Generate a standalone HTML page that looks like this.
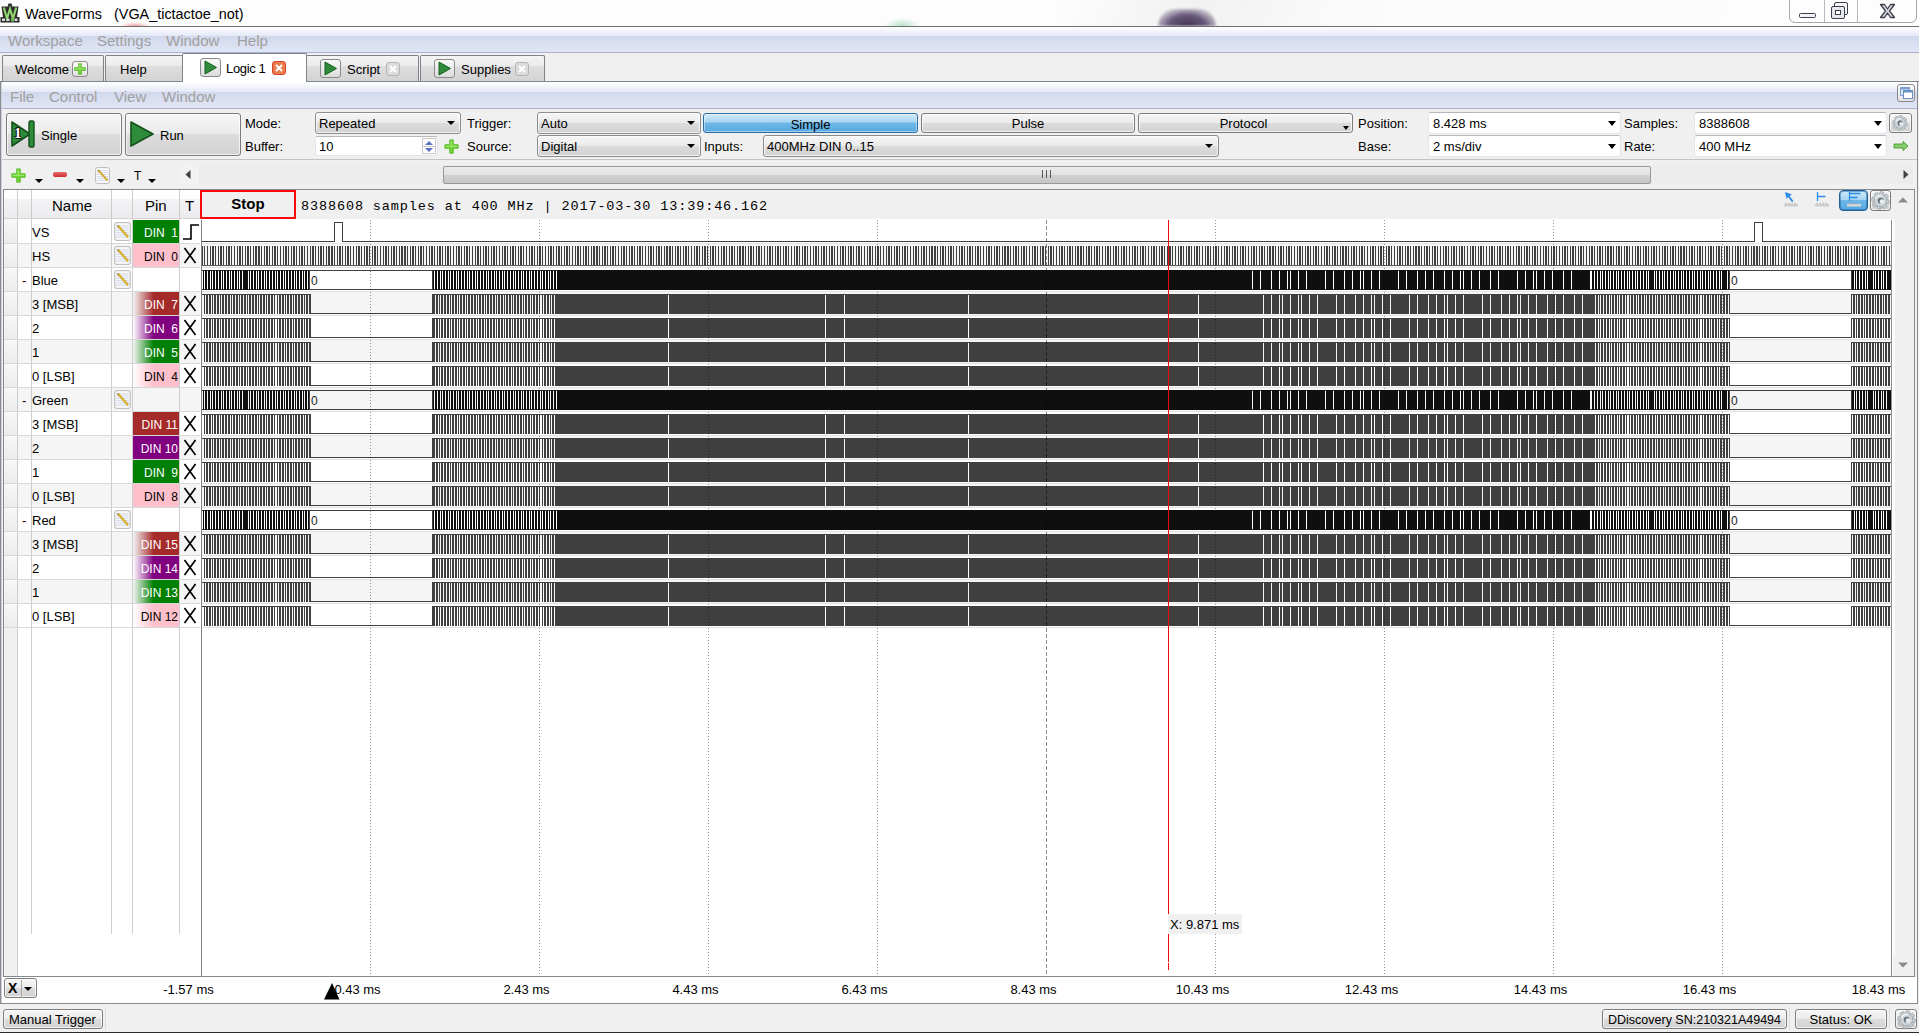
<!DOCTYPE html><html><head><meta charset="utf-8"><title>WaveForms</title><style>
*{box-sizing:border-box}
html,body{margin:0;padding:0}
body{width:1919px;height:1033px;overflow:hidden;position:relative;background:#f0f0f0;font-family:"Liberation Sans",sans-serif;font-size:13px;color:#000;line-height:1}
.a{position:absolute}
.t{position:absolute;white-space:pre;line-height:16px;height:16px}
.mb{position:absolute;left:0;width:1919px;height:26px;background:linear-gradient(#fff 0,#e4e8f6 9px,#d2d8ec 9px,#e1e6f6 25px);border-bottom:1px solid #a9b1cc}
.mt{position:absolute;white-space:pre;font-size:15px;color:#a0a0a0;line-height:20px}
.btn{position:absolute;border:1px solid #7c7c7c;border-radius:3px;background:linear-gradient(#f6f6f6 0,#eaeaea 49%,#dcdcdc 50%,#d2d2d2 100%);box-shadow:inset 0 0 0 1px rgba(255,255,255,.7)}
.cb{position:absolute;border:1px solid #8c8c8c;border-radius:3px;background:linear-gradient(#f6f6f6 0,#eaeaea 49%,#dcdcdc 50%,#d2d2d2 100%);box-shadow:inset 0 0 0 1px rgba(255,255,255,.7)}
.wb{position:absolute;border:1px solid #e1e5ee;border-top-color:#b8b8b8;border-radius:3px;background:#fff}
.arr{position:absolute;width:0;height:0;border-left:4px solid transparent;border-right:4px solid transparent;border-top:4px solid #000}
.tab{position:absolute;top:55px;height:26px;border:1px solid #7e828a;border-bottom:none;border-radius:2px 2px 0 0;background:linear-gradient(#f4f4f4 0,#ececec 38%,#dedede 40%,#d3d3d3 100%)}
.pin{position:absolute;left:133px;width:46px;height:23px;font-size:12px;line-height:26px;text-align:right;white-space:pre;padding-right:1px;overflow:hidden}
.nm{position:absolute;left:32px;white-space:pre;line-height:16px}
.xl{position:absolute;top:982px;white-space:pre;line-height:16px;width:80px;text-align:center}
</style></head><body><div class="a" style="left:0;top:0;width:1919px;height:26px;background:linear-gradient(115deg,#fdfdfd 0,#fdfdfd 55%,#f1f1f1 62%,#fbfbfb 70%,#fefefe 100%)"></div><div class="a" style="left:1158px;top:9px;width:58px;height:17px;border-radius:28px 28px 0 0;background:radial-gradient(ellipse at 50% 100%,#43364f 0,#66577a 45%,rgba(160,150,170,.5) 75%,rgba(255,255,255,0) 100%);filter:blur(1.200px)"></div><div class="a" style="left:884px;top:18px;width:36px;height:8px;background:radial-gradient(ellipse at 50% 100%,rgba(150,215,180,.7) 0,rgba(255,255,255,0) 70%)"></div><div class="a" style="left:120px;top:22px;width:30px;height:4px;background:radial-gradient(ellipse at 50% 100%,rgba(230,120,120,.7) 0,rgba(255,255,255,0) 70%)"></div><div class="a" style="left:0;top:26px;width:1919px;height:1px;background:#6e6e6e"></div><svg class="a" style="left:0px;top:3px" width="20" height="20" viewBox="0 0 20 20"><path d="M1.500 3.500 H18.500 L17 14 H19.500 V19.500 H.5 V14 H3 Z" fill="#2a2a2a"/><circle cx="10" cy="2.500" r="2.200" fill="#333"/><path d="M3.800 4.500 L7 15.500 L10 6 L13 15.500 L16.200 4.500" fill="none" stroke="#8fd46c" stroke-width="2.200"/><path d="M2 15.500 h3 v2.500 h-3z M6.500 15.500 h3 v2.500 h-3z M14.500 15.500 h3 v2.500 h-3z" fill="#d8d8d8"/><path d="M11 15 h2.500 v3.500 h-2.500z" fill="#6db84c"/></svg><div class="t" style="left:25px;top:5px;font-size:14.4px;line-height:19px;height:19px">WaveForms   (VGA_tictactoe_not)</div><div class="a" style="left:1789px;top:-4px;width:128px;height:27px;border:1px solid #a8a8a8;border-radius:0 0 6px 6px;background:#fdfdfd"></div><div class="a" style="left:1824px;top:0;width:1px;height:22px;background:#b8b8b8"></div><div class="a" style="left:1857px;top:0;width:1px;height:22px;background:#b8b8b8"></div><svg class="a" style="left:1795px;top:0" width="110" height="22" viewBox="0 0 110 22"><rect x="4.5" y="13.5" width="16" height="4" rx="1" fill="#f4f4f4" stroke="#3c3f52"/><rect x="39.500" y="2.500" width="13" height="12" rx="1.500" fill="#f4f4f4" stroke="#3c3f52"/><rect x="36.500" y="6.500" width="13" height="12" rx="1.500" fill="#e8e8e8" stroke="#3c3f52"/><rect x="40.500" y="10.500" width="5" height="4" fill="#fff" stroke="#3c3f52"/><path d="M85.500 4.500 h4 l3 4.500 l3 -4.500 h4 l-5 6.500 l5 6.500 h-4 l-3 -4.500 l-3 4.500 h-4 l5 -6.500 z" fill="#dcdcdc" stroke="#3c3f52" stroke-width="1.300" stroke-linejoin="round"/></svg><div class="mb" style="top:27px"></div><div class="mt" style="left:8px;top:31px">Workspace</div><div class="mt" style="left:97px;top:31px">Settings</div><div class="mt" style="left:166px;top:31px">Window</div><div class="mt" style="left:237px;top:31px">Help</div><div class="a" style="left:0;top:81px;width:1919px;height:1px;background:#80848c"></div><div class="tab" style="left:2px;width:102px"></div><div class="tab" style="left:105px;width:78px"></div><div class="tab" style="left:306px;width:113px"></div><div class="tab" style="left:420px;width:125px"></div><div class="a" style="left:182px;top:53px;width:125px;height:29px;border:1px solid #7e828a;border-bottom:none;border-radius:2px 2px 0 0;background:#fff"></div><div class="t" style="left:15px;top:62px">Welcome</div><div class="t" style="left:120px;top:62px">Help</div><div class="t" style="left:226px;top:61px;letter-spacing:-.35px">Logic 1</div><div class="t" style="left:347px;top:62px">Script</div><div class="t" style="left:461px;top:62px">Supplies</div><div class="a" style="left:200px;top:58px;width:21px;height:19px;border:1px solid #8a8a8a;border-radius:3px;background:linear-gradient(#f8f8f8,#dcdcdc)"></div><svg class="a" style="left:204px;top:60px" width="14" height="15" viewBox="0 0 14 15"><path d="M1 1 L12.500 7.500 L1 14 Z" fill="#2e8b3a" stroke="#14601f" stroke-width="1" stroke-linejoin="round"/></svg><div class="a" style="left:320px;top:59px;width:21px;height:19px;border:1px solid #8a8a8a;border-radius:3px;background:linear-gradient(#f8f8f8,#dcdcdc)"></div><svg class="a" style="left:324px;top:61px" width="14" height="15" viewBox="0 0 14 15"><path d="M1 1 L12.500 7.500 L1 14 Z" fill="#2e8b3a" stroke="#14601f" stroke-width="1" stroke-linejoin="round"/></svg><div class="a" style="left:434px;top:59px;width:21px;height:19px;border:1px solid #8a8a8a;border-radius:3px;background:linear-gradient(#f8f8f8,#dcdcdc)"></div><svg class="a" style="left:438px;top:61px" width="14" height="15" viewBox="0 0 14 15"><path d="M1 1 L12.500 7.500 L1 14 Z" fill="#2e8b3a" stroke="#14601f" stroke-width="1" stroke-linejoin="round"/></svg><div class="a" style="left:72px;top:61px;width:16px;height:16px;border:1px solid #8a8a8a;border-radius:3px;background:linear-gradient(#fafafa,#dedede)"></div><svg class="a" style="left:74px;top:63px" width="12" height="12" viewBox="0 0 12 12"><path d="M4.600 .7 h2.800 v3.900 h3.900 v2.800 h-3.900 v3.900 h-2.800 v-3.900 h-3.900 v-2.800 h3.900 z" fill="#6fd535" stroke="#55b322" stroke-width=".7" stroke-linejoin="round"/><path d="M5.300 1.300 h1.200 v3.900 h-1.200z M1.300 5.300 h9.400 v1 h-9.400z" fill="#a6ee7a" opacity=".8"/></svg><div class="a" style="left:272px;top:61px;width:14px;height:14px;border:1px solid #dc4428;border-radius:3px;background:#e87c4e"></div><svg class="a" style="left:275px;top:64px" width="8" height="8" viewBox="0 0 8 8"><path d="M1 1 L7 7 M7 1 L1 7" stroke="#fff" stroke-width="2"/></svg><div class="a" style="left:386px;top:62px;width:14px;height:14px;border:1px solid #b4b4b4;border-radius:3px;background:#dcdcdc"></div><svg class="a" style="left:389px;top:65px" width="8" height="8" viewBox="0 0 8 8"><path d="M1 1 L7 7 M7 1 L1 7" stroke="#fff" stroke-width="2"/></svg><div class="a" style="left:515px;top:62px;width:14px;height:14px;border:1px solid #b4b4b4;border-radius:3px;background:#dcdcdc"></div><svg class="a" style="left:518px;top:65px" width="8" height="8" viewBox="0 0 8 8"><path d="M1 1 L7 7 M7 1 L1 7" stroke="#fff" stroke-width="2"/></svg><div class="a" style="left:0;top:82px;width:1px;height:922px;background:#8a8a92"></div><div class="a" style="left:1px;top:82px;width:1px;height:922px;background:#d0d0d8"></div><div class="a" style="left:1917px;top:82px;width:1px;height:922px;background:#8a8a92"></div><div class="mb" style="top:82px;left:2px;width:1915px;height:27px;background:linear-gradient(#fff 0,#e4e8f6 10px,#d2d8ec 10px,#e1e6f6 26px)"></div><div class="mt" style="left:10px;top:87px">File</div><div class="mt" style="left:49px;top:87px">Control</div><div class="mt" style="left:114px;top:87px">View</div><div class="mt" style="left:162px;top:87px">Window</div><div class="a" style="left:1897px;top:84px;width:18px;height:18px;border:1px solid #8a8a8a;border-radius:3px;background:linear-gradient(#fafafa,#e4e4e4)"></div><svg class="a" style="left:1899px;top:86px" width="14" height="14" viewBox="0 0 14 14"><rect x="1.500" y="1.500" width="9" height="8" fill="#dfe9f7" stroke="#7d9fd0"/><rect x="1.500" y="1.500" width="9" height="2" fill="#7d9fd0"/><rect x="4.500" y="4.500" width="9" height="8" fill="#fff" stroke="#6a8fc8"/><rect x="4.500" y="4.500" width="9" height="2" fill="#6a8fc8"/></svg><div class="btn" style="left:6px;top:113px;width:116px;height:43px"></div><div class="btn" style="left:125px;top:113px;width:116px;height:43px"></div><svg class="a" style="left:10px;top:119px" width="26" height="30" viewBox="0 0 26 30"><path d="M2 3 L20 15 L2 27 Z" fill="#2e8b3a" stroke="#14501c" stroke-width="1.600" stroke-linejoin="round"/><rect x="19" y="2" width="5" height="26" rx="1.500" fill="#2e8b3a" stroke="#14501c" stroke-width="1.400"/></svg><div class="t" style="left:14px;top:125px;font-weight:bold;font-size:15px;color:#fff;font-family:'Liberation Serif',serif;text-shadow:-1px 0 #111,1px 0 #111,0 -1px #111,0 1px #111,1px 1px #111,-1px -1px #111">1</div><svg class="a" style="left:129px;top:119px" width="26" height="30" viewBox="0 0 26 30"><path d="M2 3 L24 15 L2 27 Z" fill="#2e8b3a" stroke="#14501c" stroke-width="1.600" stroke-linejoin="round"/></svg><div class="t" style="left:41px;top:128px">Single</div><div class="t" style="left:160px;top:128px">Run</div><div class="t" style="left:245px;top:116px">Mode:</div><div class="t" style="left:245px;top:139px">Buffer:</div><div class="t" style="left:467px;top:116px">Trigger:</div><div class="t" style="left:467px;top:139px">Source:</div><div class="t" style="left:704px;top:139px">Inputs:</div><div class="t" style="left:1358px;top:116px">Position:</div><div class="t" style="left:1358px;top:139px">Base:</div><div class="t" style="left:1624px;top:116px">Samples:</div><div class="t" style="left:1624px;top:139px">Rate:</div><div class="cb" style="left:315px;top:112px;width:146px;height:22px"></div><div class="t" style="left:319px;top:116px">Repeated</div><div class="arr" style="left:447px;top:121px"></div><div class="cb" style="left:537px;top:112px;width:164px;height:22px"></div><div class="t" style="left:541px;top:116px">Auto</div><div class="arr" style="left:687px;top:121px"></div><div class="cb" style="left:537px;top:135px;width:164px;height:22px"></div><div class="t" style="left:541px;top:139px">Digital</div><div class="arr" style="left:687px;top:144px"></div><div class="cb" style="left:763px;top:135px;width:456px;height:22px"></div><div class="t" style="left:767px;top:139px">400MHz DIN 0..15</div><div class="arr" style="left:1205px;top:144px"></div><div class="wb" style="left:315px;top:136px;width:123px;height:20px"></div><div class="t" style="left:319px;top:139px">10</div><div class="a" style="left:422px;top:138px;width:14px;height:16px;border:1px solid #c8c8c8;background:#fff"></div><div class="a" style="left:422px;top:146px;width:14px;height:1px;background:#c8c8c8"></div><svg class="a" style="left:424px;top:140px" width="10" height="13" viewBox="0 0 10 13"><path d="M1 5 L5 1 L9 5 Z M1 8 L5 12 L9 8 Z" fill="#5a72c0"/></svg><svg class="a" style="left:444px;top:139px" width="15" height="15" viewBox="0 0 12 12"><path d="M4.600 .7 h2.800 v3.900 h3.900 v2.800 h-3.900 v3.900 h-2.800 v-3.900 h-3.900 v-2.800 h3.900 z" fill="#6fd535" stroke="#55b322" stroke-width=".7" stroke-linejoin="round"/><path d="M5.300 1.300 h1.200 v3.900 h-1.200z M1.300 5.300 h9.400 v1 h-9.400z" fill="#a6ee7a" opacity=".8"/></svg><div class="a" style="left:703px;top:113px;width:215px;height:20px;border:1px solid #2c6fa8;border-radius:3px;background:linear-gradient(#d2ecfa 0,#a6d4f2 45%,#6eb8e8 50%,#56a8e0 100%);box-shadow:inset 0 0 0 1px rgba(255,255,255,.45)"></div><div class="btn" style="left:921px;top:113px;width:214px;height:20px"></div><div class="btn" style="left:1138px;top:113px;width:215px;height:20px"></div><div class="t" style="left:703px;top:117px;width:215px;text-align:center">Simple</div><div class="t" style="left:921px;top:116px;width:214px;text-align:center">Pulse</div><div class="t" style="left:1138px;top:116px;width:211px;text-align:center">Protocol</div><div class="arr" style="left:1343px;top:126px;border-left-width:3.500px;border-right-width:3.500px"></div><div class="wb" style="left:1428px;top:112px;width:193px;height:22px"></div><div class="t" style="left:1433px;top:116px">8.428 ms</div><div class="arr" style="left:1607.5px;top:121px;border-left-width:4.500px;border-right-width:4.500px;border-top-width:5px"></div><div class="wb" style="left:1428px;top:135px;width:193px;height:22px"></div><div class="t" style="left:1433px;top:139px">2 ms/div</div><div class="arr" style="left:1607.5px;top:144px;border-left-width:4.500px;border-right-width:4.500px;border-top-width:5px"></div><div class="wb" style="left:1694px;top:112px;width:193px;height:22px"></div><div class="t" style="left:1699px;top:116px">8388608</div><div class="arr" style="left:1873.5px;top:121px;border-left-width:4.500px;border-right-width:4.500px;border-top-width:5px"></div><div class="wb" style="left:1694px;top:135px;width:193px;height:22px"></div><div class="t" style="left:1699px;top:139px">400 MHz</div><div class="arr" style="left:1873.5px;top:144px;border-left-width:4.500px;border-right-width:4.500px;border-top-width:5px"></div><div class="btn" style="left:1889px;top:113px;width:23px;height:20px"></div><svg class="a" style="left:1892px;top:115px" width="16" height="16" viewBox="-9 -9 18 18"><g fill="#c9cfd2" stroke="#98a2a8" stroke-width=".7"><rect x="-1.900" y="-8.300" width="3.800" height="4" rx=".7" transform="rotate(10)"/><rect x="-1.900" y="-8.300" width="3.800" height="4" rx=".7" transform="rotate(55)"/><rect x="-1.900" y="-8.300" width="3.800" height="4" rx=".7" transform="rotate(100)"/><rect x="-1.900" y="-8.300" width="3.800" height="4" rx=".7" transform="rotate(145)"/><rect x="-1.900" y="-8.300" width="3.800" height="4" rx=".7" transform="rotate(190)"/><rect x="-1.900" y="-8.300" width="3.800" height="4" rx=".7" transform="rotate(235)"/><rect x="-1.900" y="-8.300" width="3.800" height="4" rx=".7" transform="rotate(280)"/><rect x="-1.900" y="-8.300" width="3.800" height="4" rx=".7" transform="rotate(325)"/><circle r="5.900"/></g><circle r="5.400" fill="#cdd3d6"/><path d="M-4.800 -1.500 A5 5 0 0 1 1.500 -4.800" stroke="#f2f4f5" stroke-width="1.500" fill="none"/><circle r="2.900" cx=".3" cy=".2" fill="#5f717c"/><circle r="2.300" cx="1.400" cy="1.100" fill="#e9ecee"/></svg><svg class="a" style="left:1893px;top:140px" width="16" height="12" viewBox="0 0 16 12"><path d="M1 4 h9 v-2.500 l5 4.500 l-5 4.500 v-2.500 h-9 z" fill="#86cc6e" stroke="#459a30" stroke-width=".9" stroke-linejoin="round"/></svg><div class="a" style="left:2px;top:159px;width:1915px;height:1px;background:#c4c4c4"></div><svg class="a" style="left:11px;top:168px" width="15" height="15" viewBox="0 0 12 12"><path d="M4.600 .7 h2.800 v3.900 h3.900 v2.800 h-3.900 v3.900 h-2.800 v-3.900 h-3.900 v-2.800 h3.900 z" fill="#6fd535" stroke="#55b322" stroke-width=".7" stroke-linejoin="round"/><path d="M5.300 1.300 h1.200 v3.900 h-1.200z M1.300 5.300 h9.400 v1 h-9.400z" fill="#a6ee7a" opacity=".8"/></svg><div class="arr" style="left:35px;top:179px;border-left-width:4px;border-right-width:4px"></div><div class="a" style="left:53px;top:172px;width:14px;height:5px;border-radius:2px;background:linear-gradient(#e86a6a,#c83030)"></div><div class="arr" style="left:76px;top:179px"></div><svg class="a" style="left:95px;top:167px" width="15" height="17" viewBox="0 0 15 17"><rect x=".5" y=".5" width="14" height="16" rx="2" fill="#f2f2f2" stroke="#c0c0c0"/><rect x="2" y="2" width="11" height="13" fill="#fafaff"/><path d="M2 3.500 h11" stroke="#c4cce8" stroke-width=".7"/><path d="M2 5.500 h11" stroke="#c4cce8" stroke-width=".7"/><path d="M2 7.500 h11" stroke="#c4cce8" stroke-width=".7"/><path d="M2 9.500 h11" stroke="#c4cce8" stroke-width=".7"/><path d="M2 11.500 h11" stroke="#c4cce8" stroke-width=".7"/><path d="M2 13.500 h11" stroke="#c4cce8" stroke-width=".7"/><path d="M3.500 3.500 L12.500 13.500" stroke="#d4b23c" stroke-width="2.200"/><path d="M3 3 L4 4" stroke="#8a7a50" stroke-width="1.200"/></svg><div class="arr" style="left:117px;top:179px"></div><div class="t" style="left:134px;top:168px;font-size:12px">T</div><div class="arr" style="left:148px;top:179px"></div><div class="a" style="left:179px;top:165px;width:1734px;height:19px;background:#ececec"></div><div class="a" style="left:179px;top:165px;width:20px;height:19px;background:#f2f2f2"></div><svg class="a" style="left:185px;top:170px" width="6" height="9" viewBox="0 0 6 9"><path d="M5.500 0 L.5 4.500 L5.500 9 Z" fill="#404040"/></svg><svg class="a" style="left:1903px;top:170px" width="6" height="9" viewBox="0 0 6 9"><path d="M.5 0 L5.500 4.500 L.5 9 Z" fill="#404040"/></svg><div class="a" style="left:443px;top:166px;width:1208px;height:18px;border:1px solid #999;border-radius:2px;background:linear-gradient(#ececec 0,#e2e2e2 49%,#d2d2d2 50%,#c6c6c6 100%)"></div><div class="a" style="left:1042px;top:170px;width:1px;height:8px;background:#555"></div><div class="a" style="left:1046px;top:170px;width:1px;height:8px;background:#555"></div><div class="a" style="left:1050px;top:170px;width:1px;height:8px;background:#555"></div><div class="a" style="left:3px;top:189px;width:1912px;height:788px;border:1px solid #828a92;border-right:none;background:#fff"></div><div class="a" style="left:1914px;top:189px;width:1px;height:788px;background:#8a8a8a"></div><div class="a" style="left:4px;top:190px;width:1889px;height:29px;background:#f0f0f0"></div><div class="a" style="left:4px;top:190px;width:196px;height:29px;background:linear-gradient(#fff 0,#fdfdfd 30%,#f3f3f5 31%,#ebebee 100%)"></div><div class="a" style="left:4px;top:218px;width:196px;height:1px;background:#d2d2d2"></div><div class="a" style="left:4px;top:219px;width:196px;height:24px;background:#fff"></div><div class="a" style="left:4px;top:219px;width:13px;height:24px;background:linear-gradient(#f8f8f8,#ececec)"></div><div class="a" style="left:4px;top:243px;width:196px;height:1px;background:#d8d8d8;z-index:1"></div><div class="a" style="left:4px;top:243px;width:196px;height:24px;background:#f5f5f5"></div><div class="a" style="left:4px;top:243px;width:13px;height:24px;background:linear-gradient(#f8f8f8,#ececec)"></div><div class="a" style="left:4px;top:267px;width:196px;height:1px;background:#d8d8d8;z-index:1"></div><div class="a" style="left:4px;top:267px;width:196px;height:24px;background:#fff"></div><div class="a" style="left:4px;top:267px;width:13px;height:24px;background:linear-gradient(#f8f8f8,#ececec)"></div><div class="a" style="left:4px;top:291px;width:196px;height:1px;background:#d8d8d8;z-index:1"></div><div class="a" style="left:4px;top:291px;width:196px;height:24px;background:#f5f5f5"></div><div class="a" style="left:4px;top:291px;width:13px;height:24px;background:linear-gradient(#f8f8f8,#ececec)"></div><div class="a" style="left:4px;top:315px;width:196px;height:1px;background:#d8d8d8;z-index:1"></div><div class="a" style="left:4px;top:315px;width:196px;height:24px;background:#fff"></div><div class="a" style="left:4px;top:315px;width:13px;height:24px;background:linear-gradient(#f8f8f8,#ececec)"></div><div class="a" style="left:4px;top:339px;width:196px;height:1px;background:#d8d8d8;z-index:1"></div><div class="a" style="left:4px;top:339px;width:196px;height:24px;background:#f5f5f5"></div><div class="a" style="left:4px;top:339px;width:13px;height:24px;background:linear-gradient(#f8f8f8,#ececec)"></div><div class="a" style="left:4px;top:363px;width:196px;height:1px;background:#d8d8d8;z-index:1"></div><div class="a" style="left:4px;top:363px;width:196px;height:24px;background:#fff"></div><div class="a" style="left:4px;top:363px;width:13px;height:24px;background:linear-gradient(#f8f8f8,#ececec)"></div><div class="a" style="left:4px;top:387px;width:196px;height:1px;background:#d8d8d8;z-index:1"></div><div class="a" style="left:4px;top:387px;width:196px;height:24px;background:#f5f5f5"></div><div class="a" style="left:4px;top:387px;width:13px;height:24px;background:linear-gradient(#f8f8f8,#ececec)"></div><div class="a" style="left:4px;top:411px;width:196px;height:1px;background:#d8d8d8;z-index:1"></div><div class="a" style="left:4px;top:411px;width:196px;height:24px;background:#fff"></div><div class="a" style="left:4px;top:411px;width:13px;height:24px;background:linear-gradient(#f8f8f8,#ececec)"></div><div class="a" style="left:4px;top:435px;width:196px;height:1px;background:#d8d8d8;z-index:1"></div><div class="a" style="left:4px;top:435px;width:196px;height:24px;background:#f5f5f5"></div><div class="a" style="left:4px;top:435px;width:13px;height:24px;background:linear-gradient(#f8f8f8,#ececec)"></div><div class="a" style="left:4px;top:459px;width:196px;height:1px;background:#d8d8d8;z-index:1"></div><div class="a" style="left:4px;top:459px;width:196px;height:24px;background:#fff"></div><div class="a" style="left:4px;top:459px;width:13px;height:24px;background:linear-gradient(#f8f8f8,#ececec)"></div><div class="a" style="left:4px;top:483px;width:196px;height:1px;background:#d8d8d8;z-index:1"></div><div class="a" style="left:4px;top:483px;width:196px;height:24px;background:#f5f5f5"></div><div class="a" style="left:4px;top:483px;width:13px;height:24px;background:linear-gradient(#f8f8f8,#ececec)"></div><div class="a" style="left:4px;top:507px;width:196px;height:1px;background:#d8d8d8;z-index:1"></div><div class="a" style="left:4px;top:507px;width:196px;height:24px;background:#fff"></div><div class="a" style="left:4px;top:507px;width:13px;height:24px;background:linear-gradient(#f8f8f8,#ececec)"></div><div class="a" style="left:4px;top:531px;width:196px;height:1px;background:#d8d8d8;z-index:1"></div><div class="a" style="left:4px;top:531px;width:196px;height:24px;background:#f5f5f5"></div><div class="a" style="left:4px;top:531px;width:13px;height:24px;background:linear-gradient(#f8f8f8,#ececec)"></div><div class="a" style="left:4px;top:555px;width:196px;height:1px;background:#d8d8d8;z-index:1"></div><div class="a" style="left:4px;top:555px;width:196px;height:24px;background:#fff"></div><div class="a" style="left:4px;top:555px;width:13px;height:24px;background:linear-gradient(#f8f8f8,#ececec)"></div><div class="a" style="left:4px;top:579px;width:196px;height:1px;background:#d8d8d8;z-index:1"></div><div class="a" style="left:4px;top:579px;width:196px;height:24px;background:#f5f5f5"></div><div class="a" style="left:4px;top:579px;width:13px;height:24px;background:linear-gradient(#f8f8f8,#ececec)"></div><div class="a" style="left:4px;top:603px;width:196px;height:1px;background:#d8d8d8;z-index:1"></div><div class="a" style="left:4px;top:603px;width:196px;height:24px;background:#fff"></div><div class="a" style="left:4px;top:603px;width:13px;height:24px;background:linear-gradient(#f8f8f8,#ececec)"></div><div class="a" style="left:4px;top:627px;width:196px;height:1px;background:#d8d8d8;z-index:1"></div><div class="a" style="left:4px;top:628px;width:13px;height:348px;background:#f0f0f0"></div><div class="a" style="left:17px;top:190px;width:1px;height:786px;background:#cdcdcd"></div><div class="a" style="left:31px;top:190px;width:1px;height:744px;background:#cdcdcd"></div><div class="a" style="left:111px;top:190px;width:1px;height:744px;background:#cdcdcd"></div><div class="a" style="left:132px;top:190px;width:1px;height:744px;background:#cdcdcd"></div><div class="a" style="left:179px;top:190px;width:1px;height:744px;background:#cdcdcd"></div><div class="t" style="left:52px;top:196px;font-size:15px;line-height:19px;height:19px">Name</div><div class="t" style="left:145px;top:196px;font-size:15px;line-height:19px;height:19px">Pin</div><div class="t" style="left:185px;top:196px;font-size:15px;line-height:19px;height:19px">T</div><div class="a" style="left:200px;top:190px;width:96px;height:29px;border:2px solid #f80a0a;background:#f0f0f0"></div><div class="t" style="left:200px;top:194px;width:96px;text-align:center;font-weight:bold;font-size:15px;line-height:19px;height:19px">Stop</div><div class="t" style="left:301px;top:199px;font-family:'Liberation Mono',monospace;font-size:13.5px;letter-spacing:.88px">8388608 samples at 400 MHz | 2017-03-30 13:39:46.162</div><div class="nm" style="top:225px">VS</div><svg class="a" style="left:114px;top:222px" width="17" height="19" viewBox="0 0 15 17"><rect x=".5" y=".5" width="14" height="16" rx="2" fill="#f2f2f2" stroke="#c0c0c0"/><rect x="2" y="2" width="11" height="13" fill="#fafaff"/><path d="M2 3.500 h11" stroke="#c4cce8" stroke-width=".7"/><path d="M2 5.500 h11" stroke="#c4cce8" stroke-width=".7"/><path d="M2 7.500 h11" stroke="#c4cce8" stroke-width=".7"/><path d="M2 9.500 h11" stroke="#c4cce8" stroke-width=".7"/><path d="M2 11.500 h11" stroke="#c4cce8" stroke-width=".7"/><path d="M2 13.500 h11" stroke="#c4cce8" stroke-width=".7"/><path d="M3.500 3.500 L12.500 13.500" stroke="#d4b23c" stroke-width="2.200"/><path d="M3 3 L4 4" stroke="#8a7a50" stroke-width="1.200"/></svg><div class="pin" style="top:220px;background:#008000;color:#fff">DIN  1</div><svg class="a" style="left:182px;top:223px" width="18" height="18" viewBox="0 0 18 18"><path d="M1 16 h8 v-14 h8" fill="none" stroke="#000" stroke-width="1.600"/></svg><div class="nm" style="top:249px">HS</div><svg class="a" style="left:114px;top:246px" width="17" height="19" viewBox="0 0 15 17"><rect x=".5" y=".5" width="14" height="16" rx="2" fill="#f2f2f2" stroke="#c0c0c0"/><rect x="2" y="2" width="11" height="13" fill="#fafaff"/><path d="M2 3.500 h11" stroke="#c4cce8" stroke-width=".7"/><path d="M2 5.500 h11" stroke="#c4cce8" stroke-width=".7"/><path d="M2 7.500 h11" stroke="#c4cce8" stroke-width=".7"/><path d="M2 9.500 h11" stroke="#c4cce8" stroke-width=".7"/><path d="M2 11.500 h11" stroke="#c4cce8" stroke-width=".7"/><path d="M2 13.500 h11" stroke="#c4cce8" stroke-width=".7"/><path d="M3.500 3.500 L12.500 13.500" stroke="#d4b23c" stroke-width="2.200"/><path d="M3 3 L4 4" stroke="#8a7a50" stroke-width="1.200"/></svg><div class="pin" style="top:244px;background:#ffc0cb;color:#000">DIN  0</div><svg class="a" style="left:183px;top:247px" width="14" height="17" viewBox="0 0 14 17"><path d="M1.500 1 L12.500 16 M12.500 1 L1.500 16" fill="none" stroke="#000" stroke-width="1.700"/></svg><div class="nm" style="top:273px">Blue</div><div class="nm" style="left:22px;top:273px">-</div><svg class="a" style="left:114px;top:270px" width="17" height="19" viewBox="0 0 15 17"><rect x=".5" y=".5" width="14" height="16" rx="2" fill="#f2f2f2" stroke="#c0c0c0"/><rect x="2" y="2" width="11" height="13" fill="#fafaff"/><path d="M2 3.500 h11" stroke="#c4cce8" stroke-width=".7"/><path d="M2 5.500 h11" stroke="#c4cce8" stroke-width=".7"/><path d="M2 7.500 h11" stroke="#c4cce8" stroke-width=".7"/><path d="M2 9.500 h11" stroke="#c4cce8" stroke-width=".7"/><path d="M2 11.500 h11" stroke="#c4cce8" stroke-width=".7"/><path d="M2 13.500 h11" stroke="#c4cce8" stroke-width=".7"/><path d="M3.500 3.500 L12.500 13.500" stroke="#d4b23c" stroke-width="2.200"/><path d="M3 3 L4 4" stroke="#8a7a50" stroke-width="1.200"/></svg><div class="nm" style="top:297px">3 [MSB]</div><div class="pin" style="top:292px;background:linear-gradient(90deg,rgba(255,255,255,0) 0,#a52a2a 45%);color:#fff">DIN  7</div><svg class="a" style="left:183px;top:295px" width="14" height="17" viewBox="0 0 14 17"><path d="M1.500 1 L12.500 16 M12.500 1 L1.500 16" fill="none" stroke="#000" stroke-width="1.700"/></svg><div class="nm" style="top:321px">2</div><div class="pin" style="top:316px;background:linear-gradient(90deg,rgba(255,255,255,0) 0,#800080 45%);color:#fff">DIN  6</div><svg class="a" style="left:183px;top:319px" width="14" height="17" viewBox="0 0 14 17"><path d="M1.500 1 L12.500 16 M12.500 1 L1.500 16" fill="none" stroke="#000" stroke-width="1.700"/></svg><div class="nm" style="top:345px">1</div><div class="pin" style="top:340px;background:linear-gradient(90deg,rgba(255,255,255,0) 0,#008000 45%);color:#fff">DIN  5</div><svg class="a" style="left:183px;top:343px" width="14" height="17" viewBox="0 0 14 17"><path d="M1.500 1 L12.500 16 M12.500 1 L1.500 16" fill="none" stroke="#000" stroke-width="1.700"/></svg><div class="nm" style="top:369px">0 [LSB]</div><div class="pin" style="top:364px;background:linear-gradient(90deg,rgba(255,255,255,0) 0,#ffc0cb 45%);color:#000">DIN  4</div><svg class="a" style="left:183px;top:367px" width="14" height="17" viewBox="0 0 14 17"><path d="M1.500 1 L12.500 16 M12.500 1 L1.500 16" fill="none" stroke="#000" stroke-width="1.700"/></svg><div class="nm" style="top:393px">Green</div><div class="nm" style="left:22px;top:393px">-</div><svg class="a" style="left:114px;top:390px" width="17" height="19" viewBox="0 0 15 17"><rect x=".5" y=".5" width="14" height="16" rx="2" fill="#f2f2f2" stroke="#c0c0c0"/><rect x="2" y="2" width="11" height="13" fill="#fafaff"/><path d="M2 3.500 h11" stroke="#c4cce8" stroke-width=".7"/><path d="M2 5.500 h11" stroke="#c4cce8" stroke-width=".7"/><path d="M2 7.500 h11" stroke="#c4cce8" stroke-width=".7"/><path d="M2 9.500 h11" stroke="#c4cce8" stroke-width=".7"/><path d="M2 11.500 h11" stroke="#c4cce8" stroke-width=".7"/><path d="M2 13.500 h11" stroke="#c4cce8" stroke-width=".7"/><path d="M3.500 3.500 L12.500 13.500" stroke="#d4b23c" stroke-width="2.200"/><path d="M3 3 L4 4" stroke="#8a7a50" stroke-width="1.200"/></svg><div class="nm" style="top:417px">3 [MSB]</div><div class="pin" style="top:412px;background:#a52a2a;color:#fff">DIN 11</div><svg class="a" style="left:183px;top:415px" width="14" height="17" viewBox="0 0 14 17"><path d="M1.500 1 L12.500 16 M12.500 1 L1.500 16" fill="none" stroke="#000" stroke-width="1.700"/></svg><div class="nm" style="top:441px">2</div><div class="pin" style="top:436px;background:#800080;color:#fff">DIN 10</div><svg class="a" style="left:183px;top:439px" width="14" height="17" viewBox="0 0 14 17"><path d="M1.500 1 L12.500 16 M12.500 1 L1.500 16" fill="none" stroke="#000" stroke-width="1.700"/></svg><div class="nm" style="top:465px">1</div><div class="pin" style="top:460px;background:#008000;color:#fff">DIN  9</div><svg class="a" style="left:183px;top:463px" width="14" height="17" viewBox="0 0 14 17"><path d="M1.500 1 L12.500 16 M12.500 1 L1.500 16" fill="none" stroke="#000" stroke-width="1.700"/></svg><div class="nm" style="top:489px">0 [LSB]</div><div class="pin" style="top:484px;background:#ffc0cb;color:#000">DIN  8</div><svg class="a" style="left:183px;top:487px" width="14" height="17" viewBox="0 0 14 17"><path d="M1.500 1 L12.500 16 M12.500 1 L1.500 16" fill="none" stroke="#000" stroke-width="1.700"/></svg><div class="nm" style="top:513px">Red</div><div class="nm" style="left:22px;top:513px">-</div><svg class="a" style="left:114px;top:510px" width="17" height="19" viewBox="0 0 15 17"><rect x=".5" y=".5" width="14" height="16" rx="2" fill="#f2f2f2" stroke="#c0c0c0"/><rect x="2" y="2" width="11" height="13" fill="#fafaff"/><path d="M2 3.500 h11" stroke="#c4cce8" stroke-width=".7"/><path d="M2 5.500 h11" stroke="#c4cce8" stroke-width=".7"/><path d="M2 7.500 h11" stroke="#c4cce8" stroke-width=".7"/><path d="M2 9.500 h11" stroke="#c4cce8" stroke-width=".7"/><path d="M2 11.500 h11" stroke="#c4cce8" stroke-width=".7"/><path d="M2 13.500 h11" stroke="#c4cce8" stroke-width=".7"/><path d="M3.500 3.500 L12.500 13.500" stroke="#d4b23c" stroke-width="2.200"/><path d="M3 3 L4 4" stroke="#8a7a50" stroke-width="1.200"/></svg><div class="nm" style="top:537px">3 [MSB]</div><div class="pin" style="top:532px;background:linear-gradient(90deg,rgba(255,255,255,0) 0,#a52a2a 45%);color:#fff">DIN 15</div><svg class="a" style="left:183px;top:535px" width="14" height="17" viewBox="0 0 14 17"><path d="M1.500 1 L12.500 16 M12.500 1 L1.500 16" fill="none" stroke="#000" stroke-width="1.700"/></svg><div class="nm" style="top:561px">2</div><div class="pin" style="top:556px;background:linear-gradient(90deg,rgba(255,255,255,0) 0,#800080 45%);color:#fff">DIN 14</div><svg class="a" style="left:183px;top:559px" width="14" height="17" viewBox="0 0 14 17"><path d="M1.500 1 L12.500 16 M12.500 1 L1.500 16" fill="none" stroke="#000" stroke-width="1.700"/></svg><div class="nm" style="top:585px">1</div><div class="pin" style="top:580px;background:linear-gradient(90deg,rgba(255,255,255,0) 0,#008000 45%);color:#fff">DIN 13</div><svg class="a" style="left:183px;top:583px" width="14" height="17" viewBox="0 0 14 17"><path d="M1.500 1 L12.500 16 M12.500 1 L1.500 16" fill="none" stroke="#000" stroke-width="1.700"/></svg><div class="nm" style="top:609px">0 [LSB]</div><div class="pin" style="top:604px;background:linear-gradient(90deg,rgba(255,255,255,0) 0,#ffc0cb 45%);color:#000">DIN 12</div><svg class="a" style="left:183px;top:607px" width="14" height="17" viewBox="0 0 14 17"><path d="M1.500 1 L12.500 16 M12.500 1 L1.500 16" fill="none" stroke="#000" stroke-width="1.700"/></svg><svg class="a" style="left:1783px;top:191px" width="16" height="18" viewBox="0 0 16 18"><path d="M2 1 L9 3.500 L6.500 5 L10.500 10 L9 11 L5 6 L3.500 8 Z" fill="#2a8be8"/><rect x="1" y="13" width="14" height="2.500" fill="#cfcfcf"/><path d="M3 11.500 v2 M6 11.500 v2 M9 11.500 v2 M12 11.500 v2" stroke="#b0b0b0"/></svg><svg class="a" style="left:1814px;top:191px" width="16" height="18" viewBox="0 0 16 18"><path d="M3.500 1 v9 M3.500 5.500 h8" stroke="#2a8be8" stroke-width="1.300" fill="none"/><rect x="1" y="13" width="14" height="2.500" fill="#cfcfcf"/><path d="M3 11.500 v2 M6 11.500 v2 M9 11.500 v2 M12 11.500 v2" stroke="#b0b0b0"/></svg><div class="a" style="left:1839px;top:190px;width:29px;height:21px;border:1px solid #1f5f98;box-shadow:inset 0 0 0 1px rgba(40,110,170,.55);border-radius:4px;background:linear-gradient(#cfeafa 0,#a6d4f2 45%,#6eb8e8 50%,#56a8e0 100%)"></div><svg class="a" style="left:1846px;top:191px" width="16" height="18" viewBox="0 0 16 18"><path d="M3.500 1 v9 M3.500 2.500 h11 M3.500 6.500 h8" stroke="#2a8be8" stroke-width="1.300" fill="none"/><rect x="1" y="13" width="14" height="2.500" fill="#d8d8d8"/><path d="M3 11.500 v2 M6 11.500 v2 M9 11.500 v2 M12 11.500 v2" stroke="#b0b0b0"/></svg><div class="btn" style="left:1870px;top:190px;width:21px;height:21px"></div><svg class="a" style="left:1871px;top:191px" width="19" height="19" viewBox="-9 -9 18 18"><g fill="#c9cfd2" stroke="#98a2a8" stroke-width=".7"><rect x="-1.900" y="-8.300" width="3.800" height="4" rx=".7" transform="rotate(10)"/><rect x="-1.900" y="-8.300" width="3.800" height="4" rx=".7" transform="rotate(55)"/><rect x="-1.900" y="-8.300" width="3.800" height="4" rx=".7" transform="rotate(100)"/><rect x="-1.900" y="-8.300" width="3.800" height="4" rx=".7" transform="rotate(145)"/><rect x="-1.900" y="-8.300" width="3.800" height="4" rx=".7" transform="rotate(190)"/><rect x="-1.900" y="-8.300" width="3.800" height="4" rx=".7" transform="rotate(235)"/><rect x="-1.900" y="-8.300" width="3.800" height="4" rx=".7" transform="rotate(280)"/><rect x="-1.900" y="-8.300" width="3.800" height="4" rx=".7" transform="rotate(325)"/><circle r="5.900"/></g><circle r="5.400" fill="#cdd3d6"/><path d="M-4.800 -1.500 A5 5 0 0 1 1.500 -4.800" stroke="#f2f4f5" stroke-width="1.500" fill="none"/><circle r="2.900" cx=".3" cy=".2" fill="#5f717c"/><circle r="2.300" cx="1.400" cy="1.100" fill="#e9ecee"/></svg><div class="a" style="left:1893px;top:190px;width:21px;height:786px;background:#f0f0f0"></div><div class="a" style="left:1893px;top:220px;width:2px;height:735px;background:#fafafa"></div><svg class="a" style="left:1898px;top:197px" width="10" height="6" viewBox="0 0 10 6"><path d="M0 5.500 L5 .5 L10 5.500 Z" fill="#8a8a8a"/></svg><svg class="a" style="left:1898px;top:962px" width="10" height="6" viewBox="0 0 10 6"><path d="M0 .5 L5 5.500 L10 .5 Z" fill="#8a8a8a"/></svg><svg class="a" style="left:201px;top:219px" width="1691" height="757" viewBox="0 0 1691 757" shape-rendering="crispEdges"><defs><g id="bit"><path d="M0 2h1v20h-1zM3 2h1v20h-1zM5 2h2v20h-2zM8 2h2v20h-2zM11 2h1v20h-1zM13 2h2v20h-2zM16 2h2v20h-2zM19 2h1v20h-1zM21 2h2v20h-2zM24 2h2v20h-2zM27 2h2v20h-2zM30 2h1v20h-1zM32 2h2v20h-2zM35 2h2v20h-2zM38 2h1v20h-1zM40 2h2v20h-2zM43 2h2v20h-2zM46 2h1v20h-1zM48 2h2v20h-2zM51 2h2v20h-2zM54 2h2v20h-2zM57 2h1v20h-1zM59 2h2v20h-2zM62 2h2v20h-2zM65 2h1v20h-1zM67 2h2v20h-2zM70 2h2v20h-2zM73 2h1v20h-1zM76 2h1v20h-1zM78 2h2v20h-2zM81 2h2v20h-2zM84 2h1v20h-1zM86 2h2v20h-2zM89 2h2v20h-2zM92 2h1v20h-1zM94 2h2v20h-2zM97 2h2v20h-2zM100 2h2v20h-2zM103 2h1v20h-1zM105 2h2v20h-2zM108 2h1v20h-1zM232 2h2v20h-2zM235 2h2v20h-2zM238 2h1v20h-1zM240 2h2v20h-2zM243 2h2v20h-2zM246 2h2v20h-2zM249 2h1v20h-1zM251 2h2v20h-2zM254 2h2v20h-2zM257 2h1v20h-1zM259 2h2v20h-2zM262 2h2v20h-2zM265 2h1v20h-1zM267 2h2v20h-2zM270 2h2v20h-2zM273 2h2v20h-2zM276 2h1v20h-1zM278 2h2v20h-2zM281 2h2v20h-2zM284 2h1v20h-1zM286 2h2v20h-2zM289 2h2v20h-2zM292 2h2v20h-2zM295 2h1v20h-1zM297 2h2v20h-2zM300 2h2v20h-2zM303 2h1v20h-1zM305 2h2v20h-2zM308 2h2v20h-2zM311 2h1v20h-1zM313 2h2v20h-2zM316 2h2v20h-2zM319 2h2v20h-2zM322 2h1v20h-1zM324 2h2v20h-2zM327 2h2v20h-2zM330 2h1v20h-1zM332 2h2v20h-2zM335 2h2v20h-2zM338 2h1v20h-1zM341 2h1v20h-1zM343 2h2v20h-2zM346 2h2v20h-2zM349 2h1v20h-1zM351 2h2v20h-2zM354 2h113v20h-113zM468 2h156v20h-156zM625 2h18v20h-18zM644 2h123v20h-123zM768 2h229v20h-229zM998 2h64v20h-64zM1063 2h7v20h-7zM1071 2h7v20h-7zM1079 2h2v20h-2zM1082 2h7v20h-7zM1090 2h7v20h-7zM1098 2h2v20h-2zM1101 2h7v20h-7zM1109 2h7v20h-7zM1117 2h18v20h-18zM1136 2h7v20h-7zM1144 2h10v20h-10zM1155 2h7v20h-7zM1163 2h7v20h-7zM1171 2h2v20h-2zM1174 2h7v20h-7zM1182 2h7v20h-7zM1190 2h18v20h-18zM1209 2h7v20h-7zM1217 2h10v20h-10zM1228 2h7v20h-7zM1236 2h7v20h-7zM1244 2h2v20h-2zM1247 2h7v20h-7zM1255 2h7v20h-7zM1263 2h18v20h-18zM1282 2h7v20h-7zM1290 2h10v20h-10zM1301 2h7v20h-7zM1309 2h7v20h-7zM1317 2h2v20h-2zM1320 2h7v20h-7zM1328 2h7v20h-7zM1336 2h10v20h-10zM1347 2h7v20h-7zM1355 2h7v20h-7zM1363 2h10v20h-10zM1374 2h7v20h-7zM1382 2h12v20h-12zM1395 2h2v20h-2zM1398 2h1v20h-1zM1400 2h2v20h-2zM1403 2h2v20h-2zM1406 2h2v20h-2zM1409 2h1v20h-1zM1411 2h2v20h-2zM1414 2h2v20h-2zM1417 2h1v20h-1zM1419 2h2v20h-2zM1422 2h2v20h-2zM1425 2h1v20h-1zM1428 2h1v20h-1zM1430 2h2v20h-2zM1433 2h2v20h-2zM1436 2h1v20h-1zM1438 2h2v20h-2zM1441 2h2v20h-2zM1444 2h1v20h-1zM1446 2h2v20h-2zM1449 2h2v20h-2zM1452 2h2v20h-2zM1455 2h1v20h-1zM1457 2h2v20h-2zM1460 2h2v20h-2zM1463 2h1v20h-1zM1465 2h2v20h-2zM1468 2h2v20h-2zM1471 2h1v20h-1zM1473 2h2v20h-2zM1476 2h2v20h-2zM1479 2h2v20h-2zM1482 2h1v20h-1zM1484 2h2v20h-2zM1487 2h2v20h-2zM1490 2h1v20h-1zM1492 2h2v20h-2zM1495 2h2v20h-2zM1498 2h1v20h-1zM1501 2h1v20h-1zM1503 2h2v20h-2zM1506 2h2v20h-2zM1509 2h1v20h-1zM1511 2h2v20h-2zM1514 2h2v20h-2zM1517 2h1v20h-1zM1519 2h2v20h-2zM1522 2h2v20h-2zM1525 2h2v20h-2zM1652 2h2v20h-2zM1655 2h1v20h-1zM1657 2h2v20h-2zM1660 2h2v20h-2zM1663 2h1v20h-1zM1665 2h2v20h-2zM1668 2h2v20h-2zM1671 2h2v20h-2zM1674 2h1v20h-1zM1676 2h2v20h-2zM1679 2h2v20h-2zM1682 2h1v20h-1zM1684 2h2v20h-2zM1687 2h2v20h-2zM1690 2h1v20h-1z" fill="#3f3f3f"/><path d="M0 2h109v1h-109zM231 2h1297v1h-1297zM1650 2h41v1h-41zM109 21h123v1h-123zM1528 21h123v1h-123zM109 2h1v20h-1zM231 2h1v20h-1zM1528 2h1v20h-1zM1650 2h1v20h-1z" fill="#404040"/></g><g id="bus"><path d="M0 2h1691v1h-1691zM0 21h1691v1h-1691zM108 2h1v20h-1zM231 2h1v20h-1zM1528 2h1v20h-1zM1650 2h1v20h-1z" fill="#404040"/><path d="M0 2h1v20h-1zM2 2h1v20h-1zM4 2h2v20h-2zM7 2h2v20h-2zM10 2h1v20h-1zM12 2h2v20h-2zM15 2h2v20h-2zM18 2h2v20h-2zM21 2h1v20h-1zM23 2h2v20h-2zM26 2h2v20h-2zM29 2h1v20h-1zM31 2h2v20h-2zM34 2h2v20h-2zM37 2h1v20h-1zM39 2h2v20h-2zM42 2h5v20h-5zM48 2h1v20h-1zM50 2h2v20h-2zM53 2h2v20h-2zM56 2h1v20h-1zM58 2h2v20h-2zM61 2h2v20h-2zM64 2h1v20h-1zM66 2h2v20h-2zM69 2h2v20h-2zM72 2h2v20h-2zM75 2h1v20h-1zM77 2h2v20h-2zM80 2h2v20h-2zM83 2h1v20h-1zM85 2h2v20h-2zM88 2h2v20h-2zM91 2h2v20h-2zM94 2h1v20h-1zM96 2h2v20h-2zM99 2h2v20h-2zM102 2h1v20h-1zM104 2h2v20h-2zM107 2h1v20h-1zM232 2h1v20h-1zM234 2h2v20h-2zM237 2h2v20h-2zM240 2h1v20h-1zM242 2h2v20h-2zM245 2h2v20h-2zM248 2h1v20h-1zM250 2h2v20h-2zM253 2h2v20h-2zM256 2h1v20h-1zM258 2h2v20h-2zM261 2h2v20h-2zM264 2h2v20h-2zM267 2h1v20h-1zM269 2h2v20h-2zM272 2h2v20h-2zM275 2h1v20h-1zM277 2h2v20h-2zM280 2h2v20h-2zM283 2h2v20h-2zM286 2h1v20h-1zM288 2h2v20h-2zM291 2h2v20h-2zM294 2h1v20h-1zM296 2h2v20h-2zM299 2h2v20h-2zM302 2h1v20h-1zM304 2h2v20h-2zM307 2h2v20h-2zM310 2h2v20h-2zM313 2h1v20h-1zM315 2h2v20h-2zM318 2h2v20h-2zM321 2h1v20h-1zM323 2h2v20h-2zM326 2h2v20h-2zM329 2h1v20h-1zM331 2h2v20h-2zM334 2h2v20h-2zM337 2h2v20h-2zM340 2h1v20h-1zM342 2h2v20h-2zM345 2h2v20h-2zM348 2h1v20h-1zM350 2h2v20h-2zM353 2h2v20h-2zM356 2h695v20h-695zM1052 2h7v20h-7zM1060 2h10v20h-10zM1071 2h7v20h-7zM1079 2h7v20h-7zM1087 2h2v20h-2zM1090 2h7v20h-7zM1098 2h7v20h-7zM1106 2h18v20h-18zM1125 2h7v20h-7zM1133 2h10v20h-10zM1144 2h7v20h-7zM1152 2h7v20h-7zM1160 2h2v20h-2zM1163 2h7v20h-7zM1171 2h7v20h-7zM1179 2h18v20h-18zM1198 2h7v20h-7zM1206 2h10v20h-10zM1217 2h7v20h-7zM1225 2h7v20h-7zM1233 2h10v20h-10zM1244 2h7v20h-7zM1252 2h7v20h-7zM1260 2h2v20h-2zM1263 2h7v20h-7zM1271 2h7v20h-7zM1279 2h10v20h-10zM1290 2h7v20h-7zM1298 2h18v20h-18zM1317 2h7v20h-7zM1325 2h7v20h-7zM1333 2h2v20h-2zM1336 2h7v20h-7zM1344 2h7v20h-7zM1352 2h10v20h-10zM1363 2h7v20h-7zM1371 2h18v20h-18zM1391 2h2v20h-2zM1394 2h2v20h-2zM1397 2h2v20h-2zM1400 2h1v20h-1zM1402 2h2v20h-2zM1405 2h2v20h-2zM1408 2h1v20h-1zM1410 2h2v20h-2zM1413 2h2v20h-2zM1416 2h1v20h-1zM1418 2h2v20h-2zM1421 2h2v20h-2zM1424 2h2v20h-2zM1427 2h1v20h-1zM1429 2h2v20h-2zM1432 2h2v20h-2zM1435 2h1v20h-1zM1437 2h2v20h-2zM1440 2h2v20h-2zM1443 2h2v20h-2zM1446 2h1v20h-1zM1448 2h5v20h-5zM1454 2h1v20h-1zM1456 2h2v20h-2zM1459 2h2v20h-2zM1462 2h1v20h-1zM1464 2h2v20h-2zM1467 2h2v20h-2zM1470 2h2v20h-2zM1473 2h1v20h-1zM1475 2h2v20h-2zM1478 2h2v20h-2zM1481 2h1v20h-1zM1483 2h2v20h-2zM1486 2h2v20h-2zM1489 2h2v20h-2zM1492 2h1v20h-1zM1494 2h2v20h-2zM1497 2h2v20h-2zM1500 2h1v20h-1zM1502 2h2v20h-2zM1505 2h2v20h-2zM1508 2h1v20h-1zM1510 2h2v20h-2zM1513 2h2v20h-2zM1516 2h2v20h-2zM1519 2h1v20h-1zM1521 2h5v20h-5zM1527 2h1v20h-1zM1651 2h2v20h-2zM1654 2h1v20h-1zM1656 2h2v20h-2zM1659 2h2v20h-2zM1662 2h2v20h-2zM1665 2h1v20h-1zM1667 2h5v20h-5zM1673 2h1v20h-1zM1675 2h2v20h-2zM1678 2h2v20h-2zM1681 2h1v20h-1zM1683 2h2v20h-2zM1686 2h5v20h-5z" fill="#0f0f0f"/></g></defs><rect x="0" y="0" width="1691" height="24" fill="#fff"/><rect x="0" y="24" width="1691" height="1" fill="#e2e2e2"/><rect x="0" y="25" width="1691" height="23" fill="#f5f5f5"/><rect x="0" y="48" width="1691" height="1" fill="#e2e2e2"/><rect x="0" y="49" width="1691" height="23" fill="#fff"/><rect x="0" y="72" width="1691" height="1" fill="#e2e2e2"/><rect x="0" y="73" width="1691" height="23" fill="#f5f5f5"/><rect x="0" y="96" width="1691" height="1" fill="#e2e2e2"/><rect x="0" y="97" width="1691" height="23" fill="#fff"/><rect x="0" y="120" width="1691" height="1" fill="#e2e2e2"/><rect x="0" y="121" width="1691" height="23" fill="#f5f5f5"/><rect x="0" y="144" width="1691" height="1" fill="#e2e2e2"/><rect x="0" y="145" width="1691" height="23" fill="#fff"/><rect x="0" y="168" width="1691" height="1" fill="#e2e2e2"/><rect x="0" y="169" width="1691" height="23" fill="#f5f5f5"/><rect x="0" y="192" width="1691" height="1" fill="#e2e2e2"/><rect x="0" y="193" width="1691" height="23" fill="#fff"/><rect x="0" y="216" width="1691" height="1" fill="#e2e2e2"/><rect x="0" y="217" width="1691" height="23" fill="#f5f5f5"/><rect x="0" y="240" width="1691" height="1" fill="#e2e2e2"/><rect x="0" y="241" width="1691" height="23" fill="#fff"/><rect x="0" y="264" width="1691" height="1" fill="#e2e2e2"/><rect x="0" y="265" width="1691" height="23" fill="#f5f5f5"/><rect x="0" y="288" width="1691" height="1" fill="#e2e2e2"/><rect x="0" y="289" width="1691" height="23" fill="#fff"/><rect x="0" y="312" width="1691" height="1" fill="#e2e2e2"/><rect x="0" y="313" width="1691" height="23" fill="#f5f5f5"/><rect x="0" y="336" width="1691" height="1" fill="#e2e2e2"/><rect x="0" y="337" width="1691" height="23" fill="#fff"/><rect x="0" y="360" width="1691" height="1" fill="#e2e2e2"/><rect x="0" y="361" width="1691" height="23" fill="#f5f5f5"/><rect x="0" y="384" width="1691" height="1" fill="#e2e2e2"/><rect x="0" y="385" width="1691" height="23" fill="#fff"/><rect x="0" y="408" width="1691" height="1" fill="#e2e2e2"/><path d="M0 22h1691v1h-1691zM133 3h9v1h-9zM133 3h1v20h-1zM141 3h1v20h-1zM1553 3h9v1h-9zM1553 3h1v20h-1zM1561 3h1v20h-1z" fill="#404040"/><path d="M134 22h7v1h-7zM1554 22h7v1h-7z" fill="#fff"/><path d="M0 27h2v20h-2zM3 27h1v20h-1zM6 27h1v20h-1zM9 27h1v20h-1zM11 27h2v20h-2zM14 27h1v20h-1zM17 27h1v20h-1zM19 27h2v20h-2zM22 27h1v20h-1zM25 27h1v20h-1zM27 27h2v20h-2zM30 27h1v20h-1zM33 27h1v20h-1zM36 27h1v20h-1zM38 27h2v20h-2zM41 27h1v20h-1zM44 27h1v20h-1zM46 27h2v20h-2zM49 27h1v20h-1zM52 27h1v20h-1zM54 27h2v20h-2zM57 27h2v20h-2zM60 27h1v20h-1zM63 27h1v20h-1zM65 27h2v20h-2zM68 27h1v20h-1zM71 27h1v20h-1zM73 27h2v20h-2zM76 27h1v20h-1zM79 27h1v20h-1zM82 27h1v20h-1zM84 27h2v20h-2zM87 27h1v20h-1zM90 27h1v20h-1zM92 27h2v20h-2zM95 27h1v20h-1zM98 27h1v20h-1zM100 27h2v20h-2zM103 27h1v20h-1zM106 27h1v20h-1zM109 27h1v20h-1zM111 27h2v20h-2zM114 27h1v20h-1zM117 27h1v20h-1zM119 27h2v20h-2zM122 27h1v20h-1zM125 27h1v20h-1zM127 27h2v20h-2zM130 27h2v20h-2zM133 27h1v20h-1zM136 27h1v20h-1zM138 27h2v20h-2zM141 27h1v20h-1zM144 27h1v20h-1zM146 27h2v20h-2zM149 27h1v20h-1zM152 27h1v20h-1zM155 27h1v20h-1zM157 27h2v20h-2zM160 27h1v20h-1zM163 27h1v20h-1zM165 27h2v20h-2zM168 27h1v20h-1zM171 27h1v20h-1zM173 27h2v20h-2zM176 27h1v20h-1zM179 27h1v20h-1zM182 27h1v20h-1zM184 27h2v20h-2zM187 27h1v20h-1zM190 27h1v20h-1zM192 27h2v20h-2zM195 27h1v20h-1zM198 27h1v20h-1zM200 27h2v20h-2zM203 27h2v20h-2zM206 27h1v20h-1zM209 27h1v20h-1zM211 27h2v20h-2zM214 27h1v20h-1zM217 27h1v20h-1zM219 27h2v20h-2zM222 27h1v20h-1zM225 27h1v20h-1zM228 27h1v20h-1zM230 27h2v20h-2zM233 27h1v20h-1zM236 27h1v20h-1zM238 27h2v20h-2zM241 27h1v20h-1zM244 27h1v20h-1zM246 27h2v20h-2zM249 27h1v20h-1zM252 27h1v20h-1zM255 27h1v20h-1zM257 27h2v20h-2zM260 27h1v20h-1zM263 27h1v20h-1zM265 27h2v20h-2zM268 27h1v20h-1zM271 27h1v20h-1zM274 27h1v20h-1zM276 27h2v20h-2zM279 27h1v20h-1zM282 27h1v20h-1zM284 27h2v20h-2zM287 27h1v20h-1zM290 27h1v20h-1zM292 27h2v20h-2zM295 27h1v20h-1zM298 27h1v20h-1zM301 27h1v20h-1zM303 27h2v20h-2zM306 27h1v20h-1zM309 27h1v20h-1zM311 27h2v20h-2zM314 27h1v20h-1zM317 27h1v20h-1zM319 27h2v20h-2zM322 27h1v20h-1zM325 27h1v20h-1zM328 27h1v20h-1zM330 27h2v20h-2zM333 27h1v20h-1zM336 27h1v20h-1zM338 27h2v20h-2zM341 27h1v20h-1zM344 27h1v20h-1zM347 27h1v20h-1zM349 27h2v20h-2zM352 27h1v20h-1zM355 27h1v20h-1zM357 27h2v20h-2zM360 27h1v20h-1zM363 27h1v20h-1zM365 27h2v20h-2zM368 27h1v20h-1zM371 27h1v20h-1zM374 27h1v20h-1zM376 27h2v20h-2zM379 27h1v20h-1zM382 27h1v20h-1zM384 27h2v20h-2zM387 27h1v20h-1zM390 27h1v20h-1zM392 27h2v20h-2zM395 27h2v20h-2zM398 27h1v20h-1zM401 27h1v20h-1zM403 27h2v20h-2zM406 27h1v20h-1zM409 27h1v20h-1zM411 27h2v20h-2zM414 27h1v20h-1zM417 27h1v20h-1zM420 27h1v20h-1zM422 27h2v20h-2zM425 27h1v20h-1zM428 27h1v20h-1zM430 27h2v20h-2zM433 27h1v20h-1zM436 27h1v20h-1zM438 27h2v20h-2zM441 27h1v20h-1zM444 27h1v20h-1zM447 27h1v20h-1zM449 27h2v20h-2zM452 27h1v20h-1zM455 27h1v20h-1zM457 27h2v20h-2zM460 27h1v20h-1zM463 27h1v20h-1zM465 27h2v20h-2zM468 27h2v20h-2zM471 27h1v20h-1zM474 27h1v20h-1zM476 27h2v20h-2zM479 27h1v20h-1zM482 27h1v20h-1zM484 27h2v20h-2zM487 27h1v20h-1zM490 27h1v20h-1zM493 27h1v20h-1zM495 27h2v20h-2zM498 27h1v20h-1zM501 27h1v20h-1zM503 27h2v20h-2zM506 27h1v20h-1zM509 27h1v20h-1zM511 27h2v20h-2zM514 27h1v20h-1zM517 27h1v20h-1zM520 27h1v20h-1zM522 27h2v20h-2zM525 27h1v20h-1zM528 27h1v20h-1zM530 27h2v20h-2zM533 27h1v20h-1zM536 27h1v20h-1zM538 27h2v20h-2zM541 27h2v20h-2zM544 27h1v20h-1zM547 27h1v20h-1zM549 27h2v20h-2zM552 27h1v20h-1zM555 27h1v20h-1zM557 27h2v20h-2zM560 27h1v20h-1zM563 27h1v20h-1zM566 27h1v20h-1zM568 27h2v20h-2zM571 27h1v20h-1zM574 27h1v20h-1zM576 27h2v20h-2zM579 27h1v20h-1zM582 27h1v20h-1zM584 27h2v20h-2zM587 27h1v20h-1zM590 27h1v20h-1zM593 27h1v20h-1zM595 27h2v20h-2zM598 27h1v20h-1zM601 27h1v20h-1zM603 27h2v20h-2zM606 27h1v20h-1zM609 27h1v20h-1zM612 27h1v20h-1zM614 27h2v20h-2zM617 27h1v20h-1zM620 27h1v20h-1zM622 27h2v20h-2zM625 27h1v20h-1zM628 27h1v20h-1zM630 27h2v20h-2zM633 27h1v20h-1zM636 27h1v20h-1zM639 27h1v20h-1zM641 27h2v20h-2zM644 27h1v20h-1zM647 27h1v20h-1zM649 27h2v20h-2zM652 27h1v20h-1zM655 27h1v20h-1zM657 27h2v20h-2zM660 27h1v20h-1zM663 27h1v20h-1zM666 27h1v20h-1zM668 27h2v20h-2zM671 27h1v20h-1zM674 27h1v20h-1zM676 27h2v20h-2zM679 27h1v20h-1zM682 27h1v20h-1zM685 27h1v20h-1zM687 27h2v20h-2zM690 27h1v20h-1zM693 27h1v20h-1zM695 27h2v20h-2zM698 27h1v20h-1zM701 27h1v20h-1zM703 27h2v20h-2zM706 27h1v20h-1zM709 27h1v20h-1zM712 27h1v20h-1zM714 27h2v20h-2zM717 27h1v20h-1zM720 27h1v20h-1zM722 27h2v20h-2zM725 27h1v20h-1zM728 27h1v20h-1zM730 27h2v20h-2zM733 27h2v20h-2zM736 27h1v20h-1zM739 27h1v20h-1zM741 27h2v20h-2zM744 27h1v20h-1zM747 27h1v20h-1zM749 27h2v20h-2zM752 27h1v20h-1zM755 27h1v20h-1zM758 27h1v20h-1zM760 27h2v20h-2zM763 27h1v20h-1zM766 27h1v20h-1zM768 27h2v20h-2zM771 27h1v20h-1zM774 27h1v20h-1zM776 27h2v20h-2zM779 27h1v20h-1zM782 27h1v20h-1zM785 27h1v20h-1zM787 27h2v20h-2zM790 27h1v20h-1zM793 27h1v20h-1zM795 27h2v20h-2zM798 27h1v20h-1zM801 27h1v20h-1zM803 27h2v20h-2zM806 27h2v20h-2zM809 27h1v20h-1zM812 27h1v20h-1zM814 27h2v20h-2zM817 27h1v20h-1zM820 27h1v20h-1zM822 27h2v20h-2zM825 27h1v20h-1zM828 27h1v20h-1zM831 27h1v20h-1zM833 27h2v20h-2zM836 27h1v20h-1zM839 27h1v20h-1zM841 27h2v20h-2zM844 27h1v20h-1zM847 27h1v20h-1zM849 27h2v20h-2zM852 27h1v20h-1zM855 27h1v20h-1zM858 27h1v20h-1zM860 27h2v20h-2zM863 27h1v20h-1zM866 27h1v20h-1zM868 27h2v20h-2zM871 27h1v20h-1zM874 27h1v20h-1zM876 27h2v20h-2zM879 27h2v20h-2zM882 27h1v20h-1zM885 27h1v20h-1zM887 27h2v20h-2zM890 27h1v20h-1zM893 27h1v20h-1zM895 27h2v20h-2zM898 27h1v20h-1zM901 27h1v20h-1zM904 27h1v20h-1zM906 27h2v20h-2zM909 27h1v20h-1zM912 27h1v20h-1zM914 27h2v20h-2zM917 27h1v20h-1zM920 27h1v20h-1zM922 27h2v20h-2zM925 27h1v20h-1zM928 27h1v20h-1zM931 27h1v20h-1zM933 27h2v20h-2zM936 27h1v20h-1zM939 27h1v20h-1zM941 27h2v20h-2zM944 27h1v20h-1zM947 27h1v20h-1zM950 27h1v20h-1zM952 27h2v20h-2zM955 27h1v20h-1zM958 27h1v20h-1zM960 27h2v20h-2zM963 27h1v20h-1zM966 27h1v20h-1zM968 27h2v20h-2zM971 27h1v20h-1zM974 27h1v20h-1zM977 27h1v20h-1zM979 27h2v20h-2zM982 27h1v20h-1zM985 27h1v20h-1zM987 27h2v20h-2zM990 27h1v20h-1zM993 27h1v20h-1zM995 27h2v20h-2zM998 27h1v20h-1zM1001 27h1v20h-1zM1004 27h1v20h-1zM1006 27h2v20h-2zM1009 27h1v20h-1zM1012 27h1v20h-1zM1014 27h2v20h-2zM1017 27h1v20h-1zM1020 27h1v20h-1zM1023 27h1v20h-1zM1025 27h2v20h-2zM1028 27h1v20h-1zM1031 27h1v20h-1zM1033 27h2v20h-2zM1036 27h1v20h-1zM1039 27h1v20h-1zM1041 27h2v20h-2zM1044 27h1v20h-1zM1047 27h1v20h-1zM1050 27h1v20h-1zM1052 27h2v20h-2zM1055 27h1v20h-1zM1058 27h1v20h-1zM1060 27h2v20h-2zM1063 27h1v20h-1zM1066 27h1v20h-1zM1068 27h2v20h-2zM1071 27h2v20h-2zM1074 27h1v20h-1zM1077 27h1v20h-1zM1079 27h2v20h-2zM1082 27h1v20h-1zM1085 27h1v20h-1zM1087 27h2v20h-2zM1090 27h1v20h-1zM1093 27h1v20h-1zM1096 27h1v20h-1zM1098 27h2v20h-2zM1101 27h1v20h-1zM1104 27h1v20h-1zM1106 27h2v20h-2zM1109 27h1v20h-1zM1112 27h1v20h-1zM1114 27h2v20h-2zM1117 27h1v20h-1zM1120 27h1v20h-1zM1123 27h1v20h-1zM1125 27h2v20h-2zM1128 27h1v20h-1zM1131 27h1v20h-1zM1133 27h2v20h-2zM1136 27h1v20h-1zM1139 27h1v20h-1zM1141 27h2v20h-2zM1144 27h2v20h-2zM1147 27h1v20h-1zM1150 27h1v20h-1zM1152 27h2v20h-2zM1155 27h1v20h-1zM1158 27h1v20h-1zM1160 27h2v20h-2zM1163 27h1v20h-1zM1166 27h1v20h-1zM1169 27h1v20h-1zM1171 27h2v20h-2zM1174 27h1v20h-1zM1177 27h1v20h-1zM1179 27h2v20h-2zM1182 27h1v20h-1zM1185 27h1v20h-1zM1187 27h2v20h-2zM1190 27h1v20h-1zM1193 27h1v20h-1zM1196 27h1v20h-1zM1198 27h2v20h-2zM1201 27h1v20h-1zM1204 27h1v20h-1zM1206 27h2v20h-2zM1209 27h1v20h-1zM1212 27h1v20h-1zM1214 27h2v20h-2zM1217 27h2v20h-2zM1220 27h1v20h-1zM1223 27h1v20h-1zM1225 27h2v20h-2zM1228 27h1v20h-1zM1231 27h1v20h-1zM1233 27h2v20h-2zM1236 27h1v20h-1zM1239 27h1v20h-1zM1242 27h1v20h-1zM1244 27h2v20h-2zM1247 27h1v20h-1zM1250 27h1v20h-1zM1252 27h2v20h-2zM1255 27h1v20h-1zM1258 27h1v20h-1zM1260 27h2v20h-2zM1263 27h1v20h-1zM1266 27h1v20h-1zM1269 27h1v20h-1zM1271 27h2v20h-2zM1274 27h1v20h-1zM1277 27h1v20h-1zM1279 27h2v20h-2zM1282 27h1v20h-1zM1285 27h1v20h-1zM1288 27h1v20h-1zM1290 27h2v20h-2zM1293 27h1v20h-1zM1296 27h1v20h-1zM1298 27h2v20h-2zM1301 27h1v20h-1zM1304 27h1v20h-1zM1306 27h2v20h-2zM1309 27h1v20h-1zM1312 27h1v20h-1zM1315 27h1v20h-1zM1317 27h2v20h-2zM1320 27h1v20h-1zM1323 27h1v20h-1zM1325 27h2v20h-2zM1328 27h1v20h-1zM1331 27h1v20h-1zM1333 27h2v20h-2zM1336 27h1v20h-1zM1339 27h1v20h-1zM1342 27h1v20h-1zM1344 27h2v20h-2zM1347 27h1v20h-1zM1350 27h1v20h-1zM1352 27h2v20h-2zM1355 27h1v20h-1zM1358 27h1v20h-1zM1361 27h1v20h-1zM1363 27h2v20h-2zM1366 27h1v20h-1zM1369 27h1v20h-1zM1371 27h2v20h-2zM1374 27h1v20h-1zM1377 27h1v20h-1zM1379 27h2v20h-2zM1382 27h1v20h-1zM1385 27h1v20h-1zM1388 27h1v20h-1zM1390 27h2v20h-2zM1393 27h1v20h-1zM1396 27h1v20h-1zM1398 27h2v20h-2zM1401 27h1v20h-1zM1404 27h1v20h-1zM1406 27h2v20h-2zM1409 27h2v20h-2zM1412 27h1v20h-1zM1415 27h1v20h-1zM1417 27h2v20h-2zM1420 27h1v20h-1zM1423 27h1v20h-1zM1425 27h2v20h-2zM1428 27h1v20h-1zM1431 27h1v20h-1zM1434 27h1v20h-1zM1436 27h2v20h-2zM1439 27h1v20h-1zM1442 27h1v20h-1zM1444 27h2v20h-2zM1447 27h1v20h-1zM1450 27h1v20h-1zM1452 27h2v20h-2zM1455 27h1v20h-1zM1458 27h1v20h-1zM1461 27h1v20h-1zM1463 27h2v20h-2zM1466 27h1v20h-1zM1469 27h1v20h-1zM1471 27h2v20h-2zM1474 27h1v20h-1zM1477 27h1v20h-1zM1479 27h2v20h-2zM1482 27h2v20h-2zM1485 27h1v20h-1zM1488 27h1v20h-1zM1490 27h2v20h-2zM1493 27h1v20h-1zM1496 27h1v20h-1zM1498 27h2v20h-2zM1501 27h1v20h-1zM1504 27h1v20h-1zM1507 27h1v20h-1zM1509 27h2v20h-2zM1512 27h1v20h-1zM1515 27h1v20h-1zM1517 27h2v20h-2zM1520 27h1v20h-1zM1523 27h1v20h-1zM1525 27h2v20h-2zM1528 27h1v20h-1zM1531 27h1v20h-1zM1534 27h1v20h-1zM1536 27h2v20h-2zM1539 27h1v20h-1zM1542 27h1v20h-1zM1544 27h2v20h-2zM1547 27h1v20h-1zM1550 27h1v20h-1zM1552 27h2v20h-2zM1555 27h2v20h-2zM1558 27h1v20h-1zM1561 27h1v20h-1zM1563 27h2v20h-2zM1566 27h1v20h-1zM1569 27h1v20h-1zM1571 27h2v20h-2zM1574 27h1v20h-1zM1577 27h1v20h-1zM1580 27h1v20h-1zM1582 27h2v20h-2zM1585 27h1v20h-1zM1588 27h1v20h-1zM1590 27h2v20h-2zM1593 27h1v20h-1zM1596 27h1v20h-1zM1598 27h2v20h-2zM1601 27h1v20h-1zM1604 27h1v20h-1zM1607 27h1v20h-1zM1609 27h2v20h-2zM1612 27h1v20h-1zM1615 27h1v20h-1zM1617 27h2v20h-2zM1620 27h1v20h-1zM1623 27h1v20h-1zM1626 27h1v20h-1zM1628 27h2v20h-2zM1631 27h1v20h-1zM1634 27h1v20h-1zM1636 27h2v20h-2zM1639 27h1v20h-1zM1642 27h1v20h-1zM1644 27h2v20h-2zM1647 27h1v20h-1zM1650 27h1v20h-1zM1653 27h1v20h-1zM1655 27h2v20h-2zM1658 27h1v20h-1zM1661 27h1v20h-1zM1663 27h2v20h-2zM1666 27h1v20h-1zM1669 27h1v20h-1zM1671 27h2v20h-2zM1674 27h1v20h-1zM1677 27h1v20h-1zM1680 27h1v20h-1zM1682 27h2v20h-2zM1685 27h1v20h-1zM1688 27h1v20h-1zM1690 27h1v20h-1z" fill="#404040"/><rect x="0" y="46" width="1691" height="1" fill="#5a5a5a"/><use href="#bus" y="49"/><use href="#bit" y="73"/><use href="#bit" y="97"/><use href="#bit" y="121"/><use href="#bit" y="145"/><use href="#bus" y="169"/><use href="#bit" y="193"/><use href="#bit" y="217"/><use href="#bit" y="241"/><use href="#bit" y="265"/><use href="#bus" y="289"/><use href="#bit" y="313"/><use href="#bit" y="337"/><use href="#bit" y="361"/><use href="#bit" y="385"/><path d="M169.500 1V757" stroke="#000" stroke-opacity=".4" stroke-dasharray="1 2" fill="none"/><path d="M338.500 1V757" stroke="#000" stroke-opacity=".4" stroke-dasharray="1 2" fill="none"/><path d="M507.500 1V757" stroke="#000" stroke-opacity=".4" stroke-dasharray="1 2" fill="none"/><path d="M676.500 1V757" stroke="#000" stroke-opacity=".4" stroke-dasharray="1 2" fill="none"/><path d="M845.500 1V757" stroke="#000" stroke-opacity=".45" stroke-dasharray="4 2" fill="none"/><path d="M1014.500 1V757" stroke="#000" stroke-opacity=".4" stroke-dasharray="1 2" fill="none"/><path d="M1183.500 1V757" stroke="#000" stroke-opacity=".4" stroke-dasharray="1 2" fill="none"/><path d="M1352.500 1V757" stroke="#000" stroke-opacity=".4" stroke-dasharray="1 2" fill="none"/><path d="M1521.500 1V757" stroke="#000" stroke-opacity=".4" stroke-dasharray="1 2" fill="none"/><rect x="967" y="1" width="1" height="742" fill="#f20808"/><rect x="967" y="744" width="1" height="7" fill="#f20808"/></svg><div class="t" style="left:311px;top:273px;font-size:12px;color:#1e1e1e">0</div><div class="t" style="left:1731px;top:273px;font-size:12px;color:#1e1e1e">0</div><div class="t" style="left:311px;top:393px;font-size:12px;color:#1e1e1e">0</div><div class="t" style="left:1731px;top:393px;font-size:12px;color:#1e1e1e">0</div><div class="t" style="left:311px;top:513px;font-size:12px;color:#1e1e1e">0</div><div class="t" style="left:1731px;top:513px;font-size:12px;color:#1e1e1e">0</div><div class="a" style="left:1891px;top:220px;width:1px;height:756px;background:#8c8c8c"></div><div class="a" style="left:201px;top:220px;width:1px;height:756px;background:#848484"></div><div class="a" style="left:1168px;top:914px;width:74px;height:20px;background:#f0f0f0"></div><div class="t" style="left:1170px;top:917px">X: 9.871 ms</div><div class="a" style="left:2px;top:977px;width:1915px;height:26px;background:#fff"></div><div class="a" style="left:0px;top:1003px;width:1918px;height:1px;background:#8a8a8a"></div><div class="a" style="left:0;top:1004px;width:1919px;height:29px;background:#f0f0f0"></div><div class="btn" style="left:4px;top:978px;width:33px;height:20px;border-radius:3px"></div><div class="a" style="left:21px;top:980px;width:1px;height:18px;background:#a8a8a8"></div><div class="t" style="left:8px;top:980px;font-weight:bold;font-size:14px">X</div><div class="arr" style="left:24px;top:987px"></div><div class="xl" style="left:148.5px">-1.57 ms</div><div class="xl" style="left:317.5px">0.43 ms</div><div class="xl" style="left:486.5px">2.43 ms</div><div class="xl" style="left:655.5px">4.43 ms</div><div class="xl" style="left:824.5px">6.43 ms</div><div class="xl" style="left:993.5px">8.43 ms</div><div class="xl" style="left:1162.5px">10.43 ms</div><div class="xl" style="left:1331.5px">12.43 ms</div><div class="xl" style="left:1500.5px">14.43 ms</div><div class="xl" style="left:1669.5px">16.43 ms</div><div class="xl" style="left:1838.5px">18.43 ms</div><svg class="a" style="left:324px;top:982px" width="16" height="18" viewBox="0 0 16 18"><path d="M0 17.500 L8 1 L15.500 17.500 Z" fill="#000"/></svg><div class="btn" style="left:3px;top:1009px;width:100px;height:20px;border-radius:3px"></div><div class="a" style="left:105px;top:1007px;width:1px;height:23px;background:#dcdcdc"></div><div class="t" style="left:9px;top:1012px">Manual Trigger</div><div class="btn" style="left:1602px;top:1009px;width:185px;height:20px;border-radius:3px"></div><div class="a" style="left:1789px;top:1007px;width:1px;height:23px;background:#dcdcdc"></div><div class="a" style="left:1889px;top:1007px;width:1px;height:23px;background:#dcdcdc"></div><div class="t" style="left:1602px;top:1012px;width:185px;text-align:center;font-size:12.5px">DDiscovery SN:210321A49494</div><div class="btn" style="left:1795px;top:1009px;width:92px;height:20px;border-radius:3px"></div><div class="t" style="left:1795px;top:1012px;width:92px;text-align:center">Status: OK</div><div class="btn" style="left:1895px;top:1009px;width:22px;height:20px;border-radius:3px"></div><svg class="a" style="left:1897px;top:1010px" width="19" height="19" viewBox="-9 -9 18 18"><g fill="#c9cfd2" stroke="#98a2a8" stroke-width=".7"><rect x="-1.900" y="-8.300" width="3.800" height="4" rx=".7" transform="rotate(10)"/><rect x="-1.900" y="-8.300" width="3.800" height="4" rx=".7" transform="rotate(55)"/><rect x="-1.900" y="-8.300" width="3.800" height="4" rx=".7" transform="rotate(100)"/><rect x="-1.900" y="-8.300" width="3.800" height="4" rx=".7" transform="rotate(145)"/><rect x="-1.900" y="-8.300" width="3.800" height="4" rx=".7" transform="rotate(190)"/><rect x="-1.900" y="-8.300" width="3.800" height="4" rx=".7" transform="rotate(235)"/><rect x="-1.900" y="-8.300" width="3.800" height="4" rx=".7" transform="rotate(280)"/><rect x="-1.900" y="-8.300" width="3.800" height="4" rx=".7" transform="rotate(325)"/><circle r="5.900"/></g><circle r="5.400" fill="#cdd3d6"/><path d="M-4.800 -1.500 A5 5 0 0 1 1.500 -4.800" stroke="#f2f4f5" stroke-width="1.500" fill="none"/><circle r="2.900" cx=".3" cy=".2" fill="#5f717c"/><circle r="2.300" cx="1.400" cy="1.100" fill="#e9ecee"/></svg><div class="a" style="left:0;top:1032px;width:1919px;height:1px;background:#2c2c2c"></div></body></html>
